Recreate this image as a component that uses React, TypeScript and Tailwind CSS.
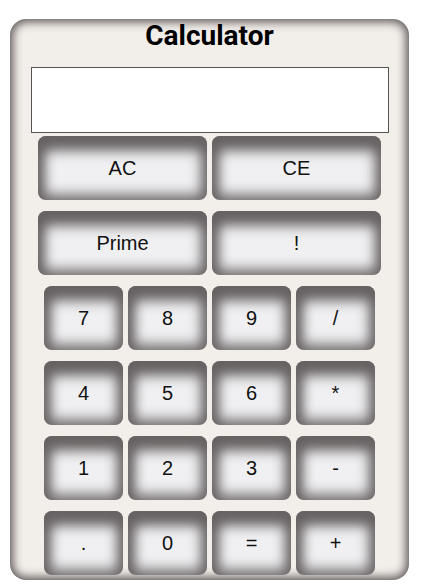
const wide = [
  ['AC', 'CE'],
  ['Prime', '!'],
];

const keys = [
  ['7', '8', '9', '/'],
  ['4', '5', '6', '*'],
  ['1', '2', '3', '-'],
  ['.', '0', '=', '+'],
];

const btn =
  'flex h-[64px] items-center justify-center rounded-[8px] bg-[#f0f0f2] text-[20px] text-[#111] shadow-[inset_0_0_14px_5px_#676263,inset_2px_14px_14px_0_#676263]';

export default function App() {
  return (
    <div className="min-h-[584px] bg-white pt-[19px] pl-[10px] font-['Liberation_Sans',Arial,sans-serif]">
      <div className="flex h-[561px] w-[399px] flex-col items-center rounded-[16px] bg-[#f2eee9] shadow-[inset_0_0_10px_3px_#5e5859]">
        <h1 className="font-['Roboto',sans-serif] text-[28px] leading-[34px] font-bold text-black">
          Calculator
        </h1>
        <div className="mt-[14px] h-[66px] w-[358px] border border-[#555] bg-white" />
        <div className="mt-[3px] flex flex-col gap-[11px]">
          {wide.map((row, i) => (
            <div key={i} className="flex gap-[5px]">
              {row.map((k) => (
                <button key={k} className={`${btn} w-[169px]`}>
                  {k}
                </button>
              ))}
            </div>
          ))}
          {keys.map((row, i) => (
            <div key={i} className="flex justify-center gap-[5px]">
              {row.map((k) => (
                <button key={k} className={`${btn} w-[79px]`}>
                  {k}
                </button>
              ))}
            </div>
          ))}
        </div>
      </div>
    </div>
  );
}
